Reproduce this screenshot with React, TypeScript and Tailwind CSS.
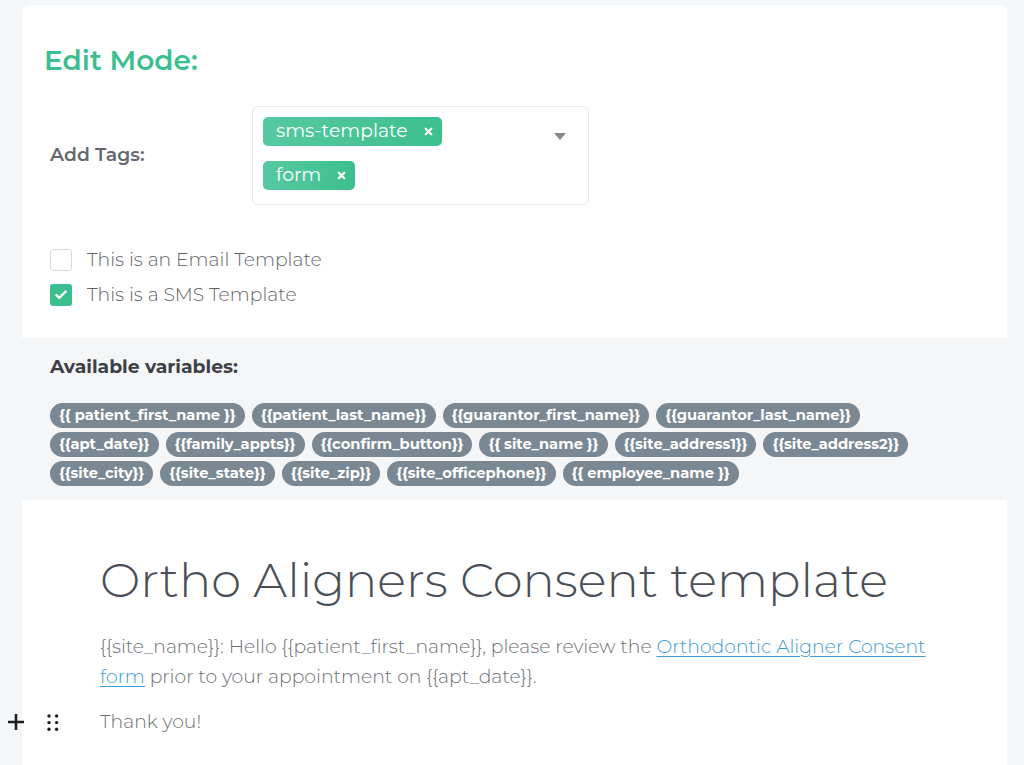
import { Check, X } from "lucide-react";

const variables = [
  "{{ patient_first_name }}",
  "{{patient_last_name}}",
  "{{guarantor_first_name}}",
  "{{guarantor_last_name}}",
  "{{apt_date}}",
  "{{family_appts}}",
  "{{confirm_button}}",
  "{{ site_name }}",
  "{{site_address1}}",
  "{{site_address2}}",
  "{{site_city}}",
  "{{site_state}}",
  "{{site_zip}}",
  "{{site_officephone}}",
  "{{ employee_name }}",
];

function Tag({ label }: { label: string }) {
  return (
    <span className="inline-flex h-[29px] items-center gap-[15px] rounded-[5px] bg-gradient-to-r from-[#56c9a0] to-[#3cbf8f] pl-[13px] pr-[8px] text-[18.8px] text-white">
      {label}
      <X className="h-[11px] w-[11px]" strokeWidth={5} />
    </span>
  );
}

function Checkbox({ checked, label }: { checked?: boolean; label: string }) {
  return (
    <label className="flex h-[28px] items-center gap-[15px]">
      {checked ? (
        <span className="flex h-[22px] w-[22px] items-center justify-center rounded-[3px] bg-[#3cbf8f]">
          <Check className="h-[14px] w-[14px] text-white" strokeWidth={4} />
        </span>
      ) : (
        <span className="h-[22px] w-[22px] rounded-[3px] border border-[#d5d9de] bg-white" />
      )}
      <span className="text-[18.8px] font-light text-[#5f6368]">{label}</span>
    </label>
  );
}

export default function App() {
  return (
    <div className="min-h-[765px] bg-[#f5f8fb] pt-[5px] font-['Montserrat','Inter',sans-serif]">
      <div className="ml-[22px] w-[985px]">
        <section className="rounded-t-[8px] bg-white px-[28px] pb-[29px] pt-[34px]">
          <h1 className="-ml-[6px] h-[42px] text-[28px] font-semibold leading-[42px] text-[#3cbf8f]">
            Edit Mode:
          </h1>

          <div className="mt-[25px] flex items-center">
            <span className="w-[202px] text-[18.8px] font-semibold text-[#666a70]">Add Tags:</span>
            <div className="flex h-[99px] w-[337px] justify-between rounded-[6px] border border-[#e6e8eb] pl-[10px] pr-[22px] pt-[10px]">
              <div className="flex flex-col items-start gap-[15px]">
                <Tag label="sms-template" />
                <Tag label="form" />
              </div>
              <svg viewBox="0 0 12 7" className="mt-[16px] h-[7px] w-[12px] fill-[#888]">
                <path d="M0 0h12L6 7z" />
              </svg>
            </div>
          </div>

          <div className="mt-[41px] flex flex-col gap-[7px]">
            <Checkbox label="This is an Email Template" />
            <Checkbox checked label="This is a SMS Template" />
          </div>
        </section>

        <section className="bg-[#f5f6f8] px-[28px] pb-[14px] pt-[15px]">
          <h2 className="h-[28px] text-[18.8px] font-bold leading-[28px] text-[#3d4046]">
            Available variables:
          </h2>
          <div className="mt-[22px] flex max-w-[890px] flex-wrap gap-x-[7px] gap-y-[4px]">
            {variables.map((v) => (
              <span
                key={v}
                className="inline-flex h-[25px] items-center rounded-full bg-[#7a8893] px-[9px] text-[14.7px] font-bold text-white"
              >
                {v}
              </span>
            ))}
          </div>
        </section>

        <section className="min-h-[265px] bg-white pl-[78px] pr-[70px] pt-[52px]">
          <h1 className="text-[48px] font-light leading-[1.2] text-[#4a4f57]">
            Ortho Aligners Consent template
          </h1>
          <p className="mt-[22px] text-[18.8px] font-light leading-[30px] text-[#6b6f75]">
            {"{{site_name}}: Hello {{patient_first_name}}, please review the "}
            <a href="#" className="text-[#3d9bd6] underline underline-offset-[3px]">
              Orthodontic Aligner Consent form
            </a>
            {" prior to your appointment on {{apt_date}}."}
          </p>
          <div className="relative mt-[15px] flex items-center">
            {/* block toolbar hanging left of the editor */}
            <div className="absolute left-[-92px] top-[7px] flex items-center gap-[23px]">
              <svg viewBox="0 0 16 16" className="h-[16px] w-[16px]">
                <path d="M8 0v16M0 8h16" stroke="#1e1e1e" strokeWidth="2.6" />
              </svg>
              <svg viewBox="0 0 12 17" className="h-[17px] w-[12px] fill-[#1e1e1e]">
                <circle cx="2" cy="2" r="1.7" />
                <circle cx="9.6" cy="2" r="1.7" />
                <circle cx="2" cy="8.6" r="1.7" />
                <circle cx="9.6" cy="8.6" r="1.7" />
                <circle cx="2" cy="15.2" r="1.7" />
                <circle cx="9.6" cy="15.2" r="1.7" />
              </svg>
            </div>
            <p className="text-[18.8px] font-light leading-[30px] text-[#6b6f75]">Thank you!</p>
          </div>
        </section>
      </div>
    </div>
  );
}
